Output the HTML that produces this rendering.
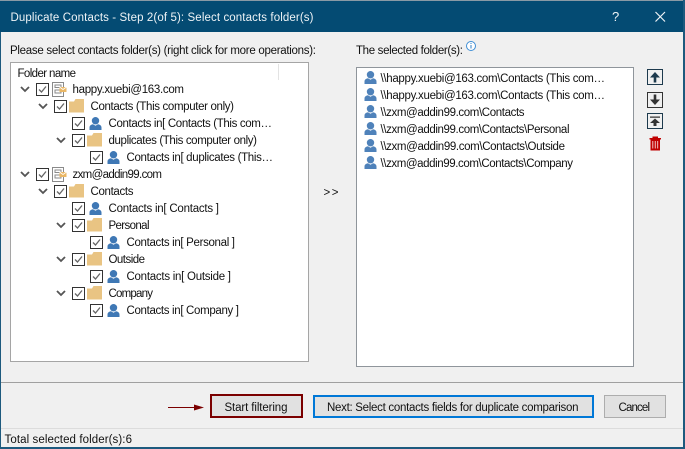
<!DOCTYPE html>
<html><head><meta charset="utf-8"><title>Duplicate Contacts</title>
<style>
html,body{margin:0;padding:0;background:#f0f0f0;overflow:hidden}
svg{display:block}
text{font-family:"Liberation Sans",sans-serif;font-size:11.5px;fill:#111}
</style></head><body>
<svg width="685" height="449" viewBox="0 0 685 449" xmlns="http://www.w3.org/2000/svg">
<defs>
<g id="cb"><rect x=".5" y=".5" width="12" height="12" fill="#fff" stroke="#333"/><path d="M3 6.500L5.500 9L10 3.500" fill="none" stroke="#666" stroke-width="1.300"/></g>
<path id="chev" d="M-4-2L0 2L4-2" fill="none" stroke="#555" stroke-width="1.800"/>
<path id="folder" d="M0 2.500V13.500H15V0H6.500L5 2.500Z" fill="#e9c483"/>
<g id="person"><circle cx="6.500" cy="3.700" r="3.700"/><path d="M.5 13V10.500C.5 8.500 2.500 7.500 4 7.300L6.500 8.800L9 7.300C10.500 7.500 12.500 8.500 12.500 10.500V13Z"/></g>
<g id="acct"><path d="M.5.500H11.500V14.500H.5Z M3 3H9V5.500H3Z M3 8H9V11H3Z" fill="none" stroke="#8a8a8a"/><path d="M7.500 5H14.500V10H7.500Z" fill="#eab765"/><path d="M7.500 5L11 7.500L14.500 5" fill="none" stroke="#fff" stroke-width=".8"/></g>
</defs>

<!-- window -->
<rect x="0" y="0" width="685" height="449" fill="#1d5a7e"/>
<rect x="1" y="0" width="682" height="447" fill="#f0f0f0"/>
<rect x="0" y="0" width="685" height="32" fill="#044b73"/>
<rect x="0" y="0" width="685" height="1" fill="#8a9aa5"/>
<rect x="683" y="0" width="2" height="449" fill="#1d5a7e"/>
<text x="10.500" y="21" textLength="303" style="fill:#eef3f6">Duplicate Contacts - Step 2(of 5): Select contacts folder(s)</text>
<text x="612" y="21" style="fill:#eef3f6;font-size:13px">?</text>
<path d="M655.500 12L665 21.500M665 12L655.500 21.500" stroke="#eef3f6" stroke-width="1.200" fill="none"/>

<!-- left -->
<text x="10" y="54" textLength="306">Please select contacts folder(s) (right click for more operations):</text>
<rect x="10.500" y="62.500" width="298" height="299" fill="#fff" stroke="#a5a5a5"/>
<text x="17.500" y="77" textLength="58.500">Folder name</text>
<rect x="278" y="64" width="1" height="16" fill="#e3e3e3"/>

<use href="#chev" x="25" y="89"/><use href="#cb" x="36" y="83"/><use href="#acct" x="52" y="82"/>
<text x="72.500" y="93" textLength="111.500">happy.xuebi@163.com</text>
<use href="#chev" x="43" y="106"/><use href="#cb" x="54" y="100"/><use href="#folder" x="69" y="99"/>
<text x="90.500" y="110" textLength="143.500">Contacts (This computer only)</text>
<use href="#cb" x="72" y="117"/><use href="#person" x="89" y="117" fill="#3f78b5"/>
<text x="108.500" y="127" textLength="163.500">Contacts in[ Contacts (This com…</text>
<use href="#chev" x="61" y="140"/><use href="#cb" x="72" y="134"/><use href="#folder" x="87" y="133"/>
<text x="108.500" y="144" textLength="148.500">duplicates (This computer only)</text>
<use href="#cb" x="90" y="151"/><use href="#person" x="107" y="151" fill="#3f78b5"/>
<text x="126.500" y="161" textLength="146.500">Contacts in[ duplicates (This…</text>

<use href="#chev" x="25" y="174"/><use href="#cb" x="36" y="168"/><use href="#acct" x="52" y="167"/>
<text x="72.500" y="178" textLength="89.500">zxm@addin99.com</text>
<use href="#chev" x="43" y="191"/><use href="#cb" x="54" y="185"/><use href="#folder" x="69" y="184"/>
<text x="90.500" y="195" textLength="43">Contacts</text>
<use href="#cb" x="72" y="202"/><use href="#person" x="89" y="202" fill="#3f78b5"/>
<text x="108.500" y="212" textLength="110.500">Contacts in[ Contacts ]</text>
<use href="#chev" x="61" y="225"/><use href="#cb" x="72" y="219"/><use href="#folder" x="87" y="218"/>
<text x="108.500" y="229" textLength="41">Personal</text>
<use href="#cb" x="90" y="236"/><use href="#person" x="107" y="236" fill="#3f78b5"/>
<text x="126.500" y="246" textLength="108.500">Contacts in[ Personal ]</text>
<use href="#chev" x="61" y="259"/><use href="#cb" x="72" y="253"/><use href="#folder" x="87" y="252"/>
<text x="108.500" y="263" textLength="36.500">Outside</text>
<use href="#cb" x="90" y="270"/><use href="#person" x="107" y="270" fill="#3f78b5"/>
<text x="126.500" y="280" textLength="104.500">Contacts in[ Outside ]</text>
<use href="#chev" x="61" y="293"/><use href="#cb" x="72" y="287"/><use href="#folder" x="87" y="286"/>
<text x="108.500" y="297" textLength="44.500">Company</text>
<use href="#cb" x="90" y="304"/><use href="#person" x="107" y="304" fill="#3f78b5"/>
<text x="126.500" y="314" textLength="112.500">Contacts in[ Company ]</text>

<text x="323.500" y="196" textLength="15">&gt;&gt;</text>

<!-- right -->
<text x="356" y="54" textLength="107">The selected folder(s):</text>
<circle cx="471" cy="46" r="4.500" fill="#fff" stroke="#3f8fd6"/>
<rect x="470.500" y="45" width="1" height="3.500" fill="#2f7fc6"/><rect x="470.500" y="43" width="1" height="1" fill="#2f7fc6"/>
<rect x="356.500" y="67.500" width="277" height="299" fill="#fff" stroke="#8f959b"/>
<use href="#person" x="364" y="71" fill="#4f82ba"/>
<text x="380.500" y="82" textLength="224.500">\\happy.xuebi@163.com\Contacts (This com…</text>
<use href="#person" x="364" y="88" fill="#4f82ba"/>
<text x="380.500" y="99" textLength="224.500">\\happy.xuebi@163.com\Contacts (This com…</text>
<use href="#person" x="364" y="105" fill="#4f82ba"/>
<text x="380.500" y="116" textLength="144">\\zxm@addin99.com\Contacts</text>
<use href="#person" x="364" y="122" fill="#4f82ba"/>
<text x="380.500" y="133" textLength="189">\\zxm@addin99.com\Contacts\Personal</text>
<use href="#person" x="364" y="139" fill="#4f82ba"/>
<text x="380.500" y="150" textLength="184.500">\\zxm@addin99.com\Contacts\Outside</text>
<use href="#person" x="364" y="156" fill="#4f82ba"/>
<text x="380.500" y="167" textLength="192.500">\\zxm@addin99.com\Contacts\Company</text>

<!-- side buttons -->
<rect x="647.500" y="69.500" width="15" height="15" fill="#f0f0f0" stroke="#1d3a4d"/>
<path d="M655 72L660 77.500H656.300V82.500H653.700V77.500H650Z" fill="#1d3a4d"/>
<rect x="647.500" y="92.500" width="15" height="15" fill="#f0f0f0" stroke="#333"/>
<path d="M655 105L650 99.500H653.700V94.500H656.300V99.500H660Z" fill="#333"/>
<rect x="647.500" y="113.500" width="15" height="15" fill="#f0f0f0" stroke="#1d3a4d"/>
<path d="M650 116.500H660V117.800H650ZM655 118.500L660 123H656.500V126H653.500V123H650Z" fill="#333"/>
<path d="M649.500 138H661V139.500H660V150.500H650.500V139.500H649.500ZM652.500 138V136.500H658V138Z" fill="#c00000"/>
<path d="M652.800 141V148.500M655.250 141V148.500M657.700 141V148.500" stroke="#f5d5d5" stroke-width=".9"/>

<!-- footer -->
<rect x="1" y="382" width="682" height="1" fill="#a0a0a0"/>
<rect x="1" y="428" width="682" height="1" fill="#dcdcdc"/>
<path d="M168 407.500H196" stroke="#7b0000" stroke-width="1"/>
<path d="M194 404.500L204 407.500L194 410.500Z" fill="#7b0000"/>
<rect x="211" y="395" width="91" height="22" fill="#e1e1e1" stroke="#7b0000" stroke-width="2"/>
<text x="224.500" y="411" textLength="63">Start filtering</text>
<rect x="314" y="396" width="279" height="21" fill="#e1e1e1" stroke="#0078d7" stroke-width="2"/>
<text x="327" y="411" textLength="251.500">Next: Select contacts fields for duplicate comparison</text>
<rect x="604.500" y="395.500" width="61" height="22" fill="#e1e1e1" stroke="#adadad"/>
<text x="618.500" y="411" textLength="31.500">Cancel</text>
<text x="4.500" y="443" textLength="127.500">Total selected folder(s):6</text>
</svg>
</body></html>
